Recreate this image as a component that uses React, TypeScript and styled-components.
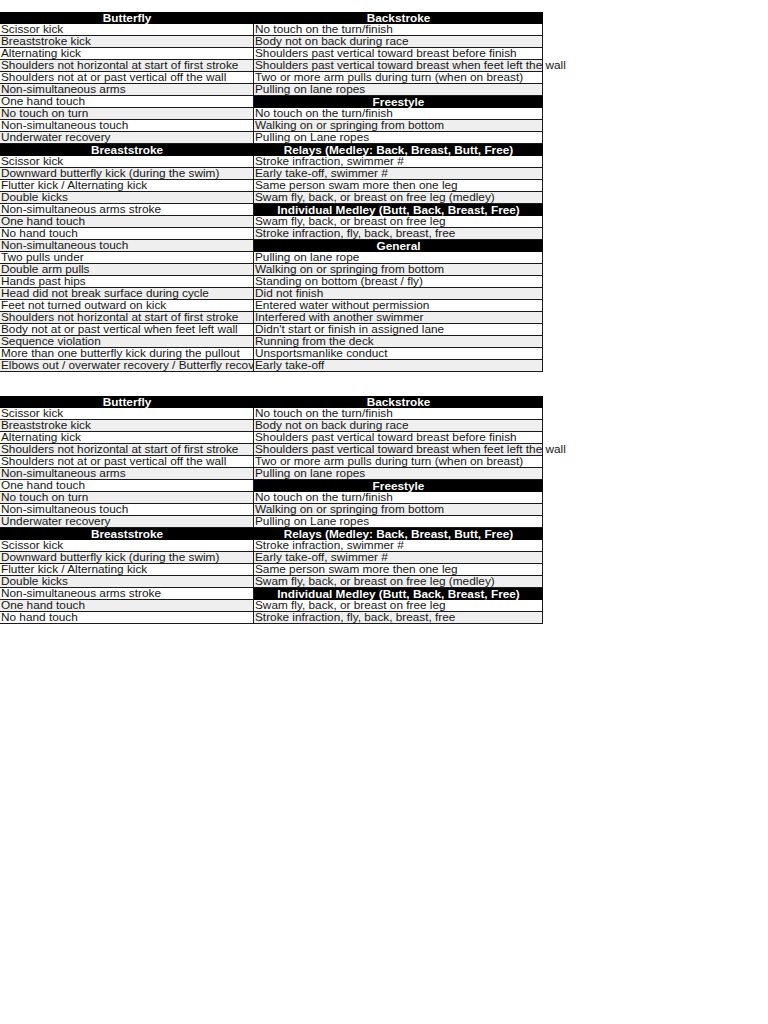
import React from 'react';
import styled, { createGlobalStyle } from 'styled-components';

interface Section {
  title: string;
  items: string[];
}

const leftSections: Section[] = [
  {
    title: 'Butterfly',
    items: [
      'Scissor kick',
      'Breaststroke kick',
      'Alternating kick',
      'Shoulders not horizontal at start of first stroke',
      'Shoulders not at or past vertical off the wall',
      'Non-simultaneous arms',
      'One hand touch',
      'No touch on turn',
      'Non-simultaneous touch',
      'Underwater recovery',
    ],
  },
  {
    title: 'Breaststroke',
    items: [
      'Scissor kick',
      'Downward butterfly kick (during the swim)',
      'Flutter kick / Alternating kick',
      'Double kicks',
      'Non-simultaneous arms stroke',
      'One hand touch',
      'No hand touch',
      'Non-simultaneous touch',
      'Two pulls under',
      'Double arm pulls',
      'Hands past hips',
      'Head did not break surface during cycle',
      'Feet not turned outward on kick',
      'Shoulders not horizontal at start of first stroke',
      'Body not at or past vertical when feet left wall',
      'Sequence violation',
      'More than one butterfly kick during the pullout',
      'Elbows out / overwater recovery / Butterfly recovery',
    ],
  },
];

const rightSections: Section[] = [
  {
    title: 'Backstroke',
    items: [
      'No touch on the turn/finish',
      'Body not on back during race',
      'Shoulders past vertical toward breast before finish',
      'Shoulders past vertical toward breast when feet left the wall',
      'Two or more arm pulls during turn (when on breast)',
      'Pulling on lane ropes',
    ],
  },
  {
    title: 'Freestyle',
    items: ['No touch on the turn/finish', 'Walking on or springing from bottom', 'Pulling on Lane ropes'],
  },
  {
    title: 'Relays (Medley: Back, Breast, Butt, Free)',
    items: [
      'Stroke infraction, swimmer #',
      'Early take-off, swimmer #',
      'Same person swam more then one leg',
      'Swam fly, back, or breast on free leg (medley)',
    ],
  },
  {
    title: 'Individual Medley (Butt, Back, Breast, Free)',
    items: ['Swam fly, back, or breast on free leg', 'Stroke infraction, fly, back, breast, free'],
  },
  {
    title: 'General',
    items: [
      'Pulling on lane rope',
      'Walking on or springing from bottom',
      'Standing on bottom (breast / fly)',
      'Did not finish',
      'Entered water without permission',
      'Interfered with another swimmer',
      "Didn't start or finish in assigned lane",
      'Running from the deck',
      'Unsportsmanlike conduct',
      'Early take-off',
    ],
  },
];

type Row = { kind: 'head' | 'item'; text: string; shade: boolean };

const flatten = (sections: Section[], limit?: number): Row[] => {
  const rows: Row[] = [];
  sections.forEach(s => {
    rows.push({ kind: 'head', text: s.title, shade: false });
    s.items.forEach((t, i) => rows.push({ kind: 'item', text: t, shade: i % 2 === 1 }));
  });
  return limit ? rows.slice(0, limit) : rows;
};

const GlobalStyle = createGlobalStyle`
  html, body {
    margin: 0;
    padding: 0;
    background: #ffffff;
  }
  body {
    font-family: "Liberation Sans", Arial, sans-serif;
    color: #111;
  }
`;

const Page = styled.div`
  display: flex;
  flex-direction: column;
  gap: 24px;
  padding-top: 12px;
`;

const Sheet = styled.div`
  display: grid;
  grid-template-columns: 254px 289px;
  width: 543px;
`;

const Column = styled.div<{ $side: 'left' | 'right' }>`
  display: flex;
  flex-direction: column;
  min-width: 0;
  overflow: ${p => (p.$side === 'left' ? 'hidden' : 'visible')};
`;

const Cell = styled.div<{ $shade: boolean; $side: 'left' | 'right' }>`
  box-sizing: border-box;
  height: 12px;
  line-height: 11px;
  font-size: 11.8px;
  white-space: nowrap;
  padding-left: ${p => (p.$side === 'left' ? '1px' : '1px')};
  background: ${p => (p.$shade ? '#efefef' : '#ffffff')};
  border-bottom: 1px solid #1a1a1a;
  border-right: 1px solid #1a1a1a;
  border-left: ${p => (p.$side === 'right' ? '0' : '0')};
  color: #161616;
  overflow: ${p => (p.$side === 'left' ? 'hidden' : 'visible')};
`;

const HeadCell = styled.div`
  box-sizing: border-box;
  height: 12px;
  line-height: 12px;
  font-size: 11.8px;
  font-weight: bold;
  text-align: center;
  white-space: nowrap;
  background: #000000;
  color: #ffffff;
`;

const SheetView: React.FC<{ limit?: number }> = ({ limit }) => (
  <Sheet>
    {(['left', 'right'] as const).map(side => (
      <Column key={side} $side={side}>
        {flatten(side === 'left' ? leftSections : rightSections, limit).map((row, i) =>
          row.kind === 'head' ? (
            <HeadCell key={i}>{row.text}</HeadCell>
          ) : (
            <Cell key={i} $shade={row.shade} $side={side}>
              {row.text}
            </Cell>
          )
        )}
      </Column>
    ))}
  </Sheet>
);

const App: React.FC = () => (
  <>
    <GlobalStyle />
    <Page>
      <SheetView />
      <SheetView limit={19} />
    </Page>
  </>
);

export default App;
